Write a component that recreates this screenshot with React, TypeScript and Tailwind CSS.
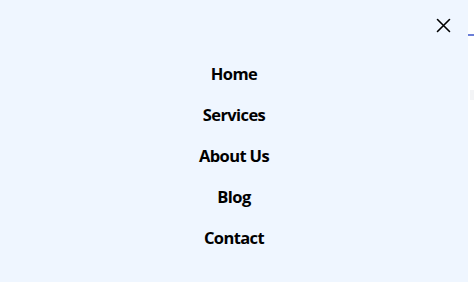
import React from "react";

export default function App() {
  const items = ["Home", "Services", "About Us", "Blog", "Contact"];
  return (
    <div className="relative w-[474px] h-[286px] bg-white overflow-hidden" style={{ fontFamily: '"Open Sans", "Noto Sans", sans-serif' }}>
      <div className="absolute right-0 top-[34px] w-[6px] h-[2px] bg-[#6b7fd7]" />
      <div className="absolute right-0 top-[90px] w-[4px] h-[10px] bg-[#f3f4f6]" />
      <div className="relative w-[468px] h-[282px] bg-[#eff6ff]">
        <button className="absolute left-[435px] top-[17px] w-[17px] h-[17px] flex items-center justify-center text-black">
          <svg width="17" height="17" viewBox="0 0 17 17" fill="none" stroke="currentColor" strokeWidth="1.6" strokeLinecap="round">
            <path d="M2.5 2.5 14.5 14.5M14.5 2.5 2.5 14.5" />
          </svg>
        </button>
        <nav className="flex flex-col items-center pt-[62px] gap-[17px]">
          {items.map((t) => (
            <a key={t} className="text-[16.5px] leading-[24px] font-bold tracking-[-0.6px] text-black">
              {t}
            </a>
          ))}
        </nav>
      </div>
    </div>
  );
}
